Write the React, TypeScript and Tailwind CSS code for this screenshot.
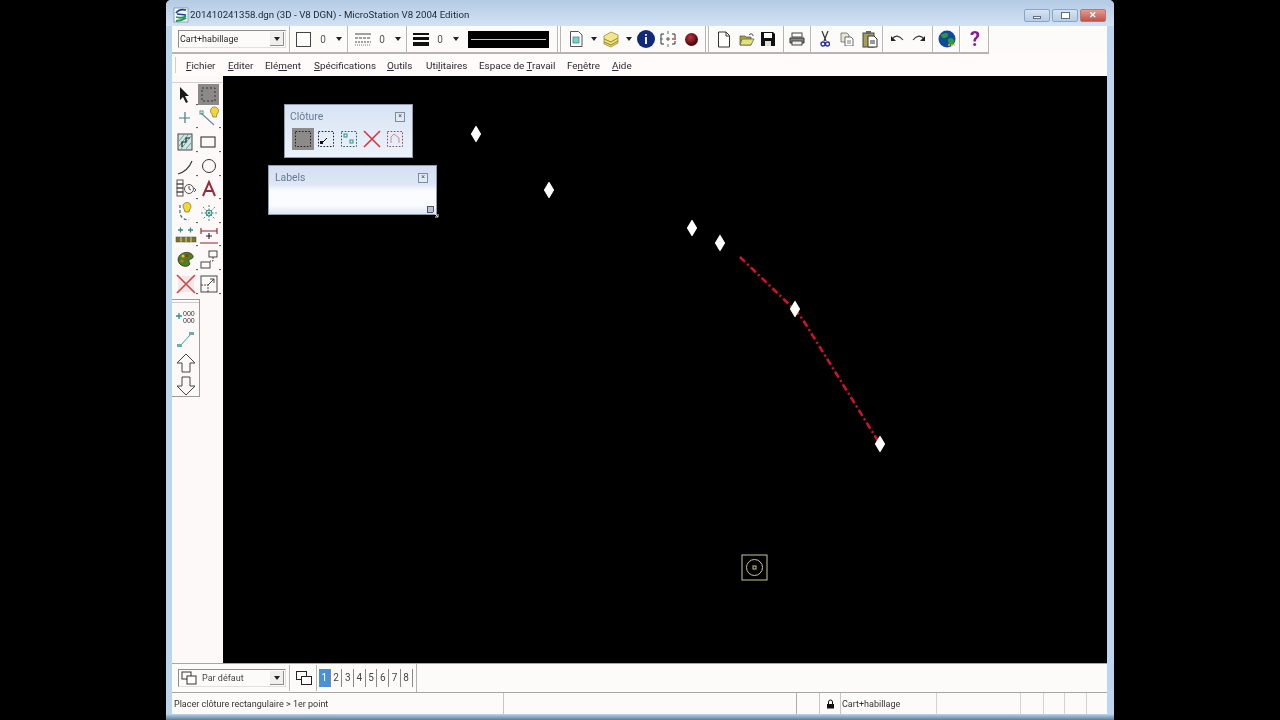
import React from "react";

const S = ({ w = 18, h = 18, vb, children, cls = "" }: { w?: number; h?: number; vb?: string; children: React.ReactNode; cls?: string }) => (
  <svg width={w} height={h} viewBox={vb ?? `0 0 ${w} ${h}`} className={"shrink-0 " + cls}>{children}</svg>
);

const Sep = ({ cls = "" }: { cls?: string }) => <div className={"h-[26px] w-[2px] shrink-0 border-l border-[#b9b6b2] bg-white " + cls} />;

const Tri = ({ cls = "" }: { cls?: string }) => <div className={"h-0 w-0 shrink-0 border-x-[3.5px] border-t-[4px] border-x-transparent border-t-[#222] " + cls} />;

const Combo = ({ children, cls = "" }: { children: React.ReactNode; cls?: string }) => (
  <div className={"flex h-[18px] w-[108px] shrink-0 items-center border border-t-[#8d8d8d] border-l-[#8d8d8d] border-r-[#e2e0de] border-b-[#e2e0de] bg-[#fdfbfa] " + cls}>
    <div className="flex min-w-0 flex-1 items-center overflow-hidden">{children}</div>
    <div className="mr-[1px] flex h-[14px] w-[14px] shrink-0 items-center justify-center border-b border-r border-[#8f8f8f] bg-[#f1efed]">
      <Tri />
    </div>
  </div>
);

const Cell = ({ x, children }: { x: string; children: React.ReactNode }) => (
  <div className={"flex shrink-0 items-center justify-center " + x}>{children}</div>
);

const WinBtn = ({ cls, children }: { cls: string; children: React.ReactNode }) => (
  <div className={"flex h-[13px] items-center justify-center rounded-[2px] border " + cls}>{children}</div>
);

const Flag = () => <path d="M22 21l2 0-1 1.5z" fill="#111" />;

const toolIcons: React.ReactNode[] = [
  <path d="M6 4l0 13 3-3 3 6 2-1-3-6 4 0z" fill="#1a1a1a" />,
  <g><rect x="1" y="1" width="21" height="21" fill="#8b8a88" /><rect x="5" y="5" width="13" height="13" fill="none" stroke="#333" strokeDasharray="2 2" /></g>,
  <g stroke="#3f7f86" strokeWidth="1.2"><path d="M11 6v11M5 12h11" /></g>,
  <g><path d="M4 7l13 12" stroke="#6f8aa0" strokeWidth="1.2" /><rect x="3" y="5" width="3" height="3" fill="none" stroke="#4a9a8a" /><path d="M15 8a4 4 0 1 1 5 0l-.6 3h-3.6z" fill="#f2d63a" stroke="#6b5a10" strokeWidth=".6" /></g>,
  <g><rect x="4" y="4" width="14" height="16" fill="#cfe6e2" stroke="#444" /><path d="M5 11l5-6M5 16l9-11M7 19l10-13M12 19l5-6" stroke="#5fa8a0" strokeWidth="1" /><path d="M8 17v-5h4V8h4" fill="none" stroke="#222" strokeWidth="1.2" /></g>,
  <rect x="4" y="7" width="14" height="10" fill="none" stroke="#333" strokeWidth="1.1" />,
  <path d="M4 20Q14 17 18 7" fill="none" stroke="#333" strokeWidth="1.1" />,
  <circle cx="12" cy="12" r="6.5" fill="none" stroke="#333" strokeWidth="1" />,
  <g fill="none" stroke="#444" strokeWidth=".9"><rect x="3" y="3" width="6" height="4" /><rect x="3" y="7" width="6" height="4" /><rect x="3" y="11" width="6" height="4" /><rect x="3" y="15" width="6" height="4" /><circle cx="15" cy="12" r="4.5" /><path d="M15 9v3l2 1M20 11l2 2-2 2" /></g>,
  <path d="M6 19L12 5l6 14M8.5 14h7" fill="none" stroke="#9a2a3a" strokeWidth="2" />,
  <g><path d="M6 4v7c0 5 4 8 9 8" fill="none" stroke="#2f6f78" strokeWidth="1.2" strokeDasharray="3 2" /><path d="M9 6a4 4 0 1 1 7 2l-1 3h-4l-1-3z" fill="#f2d63a" stroke="#6b5a10" strokeWidth=".6" /></g>,
  <g stroke="#3f8f8a" strokeWidth="1"><circle cx="12" cy="12" r="3" fill="#bfe0dc" /><path d="M12 4v16M4 12h16M6 6l12 12M18 6L6 18" strokeDasharray="2 1.5" /></g>,
  <g><path d="M4 6h5M6.5 3.500v5M14 6h5M16.500 3.500v5" stroke="#2f8f88" strokeWidth="1.3" /><rect x="2" y="13" width="20" height="5" fill="#7b7230" stroke="#444" strokeWidth=".5" /><path d="M7 13v5M12 13v5M17 13v5" stroke="#d9d6a0" /></g>,
  <g stroke="#a01828" fill="none"><path d="M4 4v6M20 4v6M4 7h16M3 19h18" strokeWidth="1.1" /><path d="M12 9v6M9 12h6" stroke="#222" strokeWidth="1.1" /></g>,
  <g><path d="M4 12c0-6 7-9 12-7 4 2 4 5 1 6-3 0-2 3-1 5-2 4-11 3-12-4z" fill="#4e7d27" stroke="#2a3a10" strokeWidth=".8" /><circle cx="9" cy="8" r="1.6" fill="#e8c020" /><circle cx="13" cy="7.5" r="1.5" fill="#c02020" /><circle cx="8" cy="13" r="1.6" fill="#d07020" /></g>,
  <g fill="none" stroke="#444"><rect x="12" y="3" width="8" height="6" /><rect x="4" y="14" width="9" height="6" /><path d="M16 9v4h-3" strokeDasharray="2 1" /></g>,
  <g><rect x="4" y="4" width="16" height="16" fill="#efe9e9" /><path d="M3 3l18 18M21 3L3 21" stroke="#d8434a" strokeWidth="1.7" fill="none" /></g>,
  <g fill="none" stroke="#444"><rect x="4" y="4" width="16" height="16" /><path d="M11 13l6-6M13 7h4v4" /><path d="M4 13h7v7" strokeDasharray="2 1" /></g>,
];

const Grid = () => (
  <div className="grid grid-cols-[23px_23px] gap-x-0 pl-[2px]">
    {toolIcons.map((ic, i) => (
      <div key={i} className="flex h-[23.6px] items-center justify-center">
        <S w={24} h={24}>{ic}{i !== 1 && <Flag />}</S>
      </div>
    ))}
  </div>
);

const Dash = ({ children, color = "#222" }: { children?: React.ReactNode; color?: string }) => (
  <S w={22} h={22}><rect x="3.5" y="3.5" width="15" height="15" fill="none" stroke={color} strokeDasharray="1.6 1.6" />{children}</S>
);

export default function App() {
  return (
    <div className="h-[720px] w-[1280px] overflow-hidden bg-black font-['Roboto','Noto_Sans',sans-serif] blur-[0.35px]">
      <div className="ml-[166px] flex h-[720px] w-[948px] flex-col rounded-t-[5px] bg-[#bcd6f0]">
        {/* Title */}
        <div className="flex h-[26px] shrink-0 items-center rounded-t-[5px] bg-gradient-to-b from-[#b4cbe4] to-[#d3e2f4] pl-[7px] pr-[8px]">
          <S w={16} h={16} cls="mt-[3px]">
            <rect x="1" y="1" width="14" height="14" fill="#f4f8fb" stroke="#5a7a9a" strokeWidth=".6" />
            <path d="M3 10c3 1 7 1 10-1M3 14c3 0 7-1 10-3" fill="none" stroke="#1e9a50" strokeWidth="1.8" />
            <path d="M3 6c2-3 6-4 10-3M4 7l9 1" fill="none" stroke="#1b3f9a" strokeWidth="1.7" />
          </S>
          <div className="ml-[1px] mt-[3px] flex-1 whitespace-nowrap text-[9.7px] leading-none text-[#1d2735]">201410241358.dgn (3D - V8 DGN) - MicroStation V8 2004 Edition</div>
          <div className="mt-[5px] flex gap-[2px]">
            <WinBtn cls="w-[26px] border-[#8ba5c4] bg-gradient-to-b from-[#d6e3f2] to-[#b8cce4]"><div className="mt-[3px] h-[3px] w-[8px] border border-[#5d6f85] bg-white" /></WinBtn>
            <WinBtn cls="w-[26px] border-[#8ba5c4] bg-gradient-to-b from-[#d6e3f2] to-[#b8cce4]"><div className="h-[7px] w-[9px] border border-[#5d6f85] bg-white" /></WinBtn>
            <WinBtn cls="w-[26px] border-[#b07a78] bg-gradient-to-b from-[#e59a8c] to-[#c2524a]"><span className="text-[9px] font-bold leading-none text-white">✕</span></WinBtn>
          </div>
        </div>

        <div className="flex min-h-0 flex-1 px-[6px] pr-[7px]">
          <div className="flex w-[935px] flex-col">
            {/* Toolbar */}
            <div className="flex h-[28px] shrink-0 items-center bg-[#fdfafa]">
              <div className="flex h-[28px] w-[817px] shrink-0 items-center border-b-2 border-[#b7b5b2] pl-[6px]">
                <Combo><span className="mt-[1px] pl-[1px] text-[9px] text-[#2a2a2a]">Cart+habillage</span></Combo>
                <Sep cls="ml-[3px]" />
                <Cell x="ml-[4px] w-[16px]"><div className="h-[15px] w-[15px] border border-[#444] bg-white" /></Cell>
                <Cell x="ml-[6px] w-[12px]"><span className="text-[10px] text-[#555]">0</span></Cell>
                <Cell x="ml-[4px] w-[12px]"><Tri /></Cell>
                <Sep cls="ml-[2px]" />
                <Cell x="ml-[5px] w-[17px]">
                  <S w={16} h={14}><path d="M0 2h16" stroke="#444" /><path d="M0 6h16" stroke="#444" strokeDasharray="3 1" /><path d="M0 10h16" stroke="#444" strokeDasharray="2 1" /><path d="M0 13h16" stroke="#777" strokeDasharray="1 1" /></S>
                </Cell>
                <Cell x="ml-[5px] w-[12px]"><span className="text-[10px] text-[#555]">0</span></Cell>
                <Cell x="ml-[4px] w-[12px]"><Tri /></Cell>
                <Sep cls="ml-[2px]" />
                <Cell x="ml-[4px] w-[17px]">
                  <S w={16} h={14}><rect y="1" width="16" height="2" fill="#111" /><rect y="5" width="16" height="3" fill="#111" /><rect y="10" width="16" height="4" fill="#111" /></S>
                </Cell>
                <Cell x="ml-[5px] w-[12px]"><span className="text-[10px] text-[#555]">0</span></Cell>
                <Cell x="ml-[4px] w-[12px]"><Tri /></Cell>
                <div className="ml-[6px] flex h-[17px] w-[81px] shrink-0 items-center bg-black px-[3px]"><div className="h-[1px] w-full bg-[#c8c8c8]" /></div>
                <Sep cls="ml-[8px]" />
                <Sep cls="ml-[1px]" />
                <Cell x="ml-[5px] w-[18px]">
                  <S w={16} h={18}><path d="M2.500 1.500h8l3.500 3.500v11.500h-11.500z" fill="#fff" stroke="#555" /><rect x="5" y="7" width="6" height="6" fill="#7fd0c0" stroke="#2f7f78" strokeWidth=".7" /></S>
                </Cell>
                <Cell x="ml-[5px] w-[8px]"><Tri /></Cell>
                <Cell x="ml-[4px] w-[18px]">
                  <S w={18} h={18}><path d="M2 6l7-4 7 3v3l-7 4-7-3z" fill="#f0e68a" stroke="#8f8028" strokeWidth=".7" /><path d="M2 9l7 3 7-4v3l-7 4-7-3z" fill="#ece07a" stroke="#8f8028" strokeWidth=".7" /><path d="M2 12l7 3 7-4v2l-7 4-7-3z" fill="#e4d66a" stroke="#8f8028" strokeWidth=".7" /></S>
                </Cell>
                <Cell x="ml-[5px] w-[8px]"><Tri /></Cell>
                <Cell x="ml-[4px] w-[18px]">
                  <div className="flex h-[18px] w-[18px] items-center justify-center rounded-full bg-[#102a78] text-[13px] font-bold leading-none text-white">i</div>
                </Cell>
                <Cell x="ml-[4px] w-[18px]">
                  <S w={18} h={18}><path d="M5 4h-3v10h3M13 4h3v4M13 14h3v-3" fill="none" stroke="#333" /><path d="M9 1v3M9 14v3M1 9h3" stroke="#2e8a6a" /><path d="M13 9h4" stroke="#cc2020" strokeWidth="1.3" /><circle cx="9" cy="9" r="1.200" fill="none" stroke="#444" /></S>
                </Cell>
                <Cell x="ml-[5px] w-[18px]">
                  <div className="h-[13px] w-[13px] rounded-full bg-[radial-gradient(circle_at_40%_35%,#c8303a,#3a080c_70%)]" />
                </Cell>
                <Sep cls="ml-[5px]" />
                <Sep cls="ml-[1px]" />
                <Cell x="ml-[5px] w-[18px]">
                  <S w={14} h={17}><path d="M1.500 1h7.500l3.500 3.500v11.500h-11z" fill="#fff" stroke="#333" /><path d="M9 1v4h3.500" fill="none" stroke="#333" /></S>
                </Cell>
                <Cell x="ml-[5px] w-[18px]">
                  <S w={16} h={14}><path d="M1 4h5l1 1h5v8H1z" fill="#a8a83a" stroke="#444" strokeWidth=".7" /><path d="M3 7h12l-3 6H1z" fill="#e4e07a" stroke="#555" strokeWidth=".7" /><path d="M10 3c2-2 4-1 4 1" fill="none" stroke="#333" /></S>
                </Cell>
                <Cell x="ml-[3px] w-[18px]">
                  <S w={14} h={14}><path d="M0 0h12l2 2v12H0z" fill="#111" /><rect x="3" y="1" width="8" height="5" fill="#fff" /><rect x="4" y="9" width="6" height="5" fill="#ddd" /></S>
                </Cell>
                <Sep cls="ml-[6px]" />
                <Cell x="ml-[3px] w-[18px]">
                  <S w={16} h={14}><rect x="3" y="1" width="10" height="4" fill="#fff" stroke="#444" /><path d="M1 6h14v5H1z" fill="#888" stroke="#333" /><rect x="3" y="9" width="10" height="4" fill="#eee" stroke="#444" /></S>
                </Cell>
                <Sep cls="ml-[4px]" />
                <Cell x="ml-[4px] w-[18px]">
                  <S w={10} h={16}><path d="M2 0l4 10M8 0L4 10" stroke="#333" strokeWidth="1.2" /><circle cx="3" cy="13" r="2" fill="none" stroke="#2b2f9a" strokeWidth="1.4" /><circle cx="7.500" cy="13" r="2" fill="none" stroke="#2b2f9a" strokeWidth="1.4" /></S>
                </Cell>
                <Cell x="ml-[4px] w-[18px]">
                  <S w={14} h={14}><path d="M1 1h6l2 2v7H1z" fill="#e6e6d2" stroke="#666" strokeWidth=".8" /><path d="M5 5h6l2 2v7H5z" fill="#fff" stroke="#444" strokeWidth=".8" /><path d="M7 9h4M7 11h4" stroke="#444" strokeWidth=".7" /></S>
                </Cell>
                <Cell x="ml-[5px] w-[18px]">
                  <S w={16} h={18}><rect x="1" y="3" width="11" height="14" fill="#a8a050" stroke="#444" /><rect x="4" y="1" width="5" height="3" fill="#666" /><path d="M6 6h6l3 3v8H6z" fill="#fff" stroke="#333" /><path d="M8 11h5M8 13h5" stroke="#333" /></S>
                </Cell>
                <Sep cls="ml-[3px]" />
                <Cell x="ml-[4px] w-[18px]">
                  <S w={14} h={10}><path d="M2 5c3-4 7-4 11 1" fill="none" stroke="#333" strokeWidth="1.1" /><path d="M1 2v5h5z" fill="#222" /></S>
                </Cell>
                <Cell x="ml-[4px] w-[18px]">
                  <S w={14} h={10}><path d="M12 5c-3-4-7-4-11 1" fill="none" stroke="#333" strokeWidth="1.1" /><path d="M13 2v5h-5z" fill="#222" /></S>
                </Cell>
                <Sep cls="ml-[4px]" />
                <Cell x="ml-[4px] w-[18px]">
                  <S w={18} h={18}><circle cx="9" cy="9" r="8.500" fill="#124a9a" /><path d="M3 5c2-2 6-3 7-1s-2 4-4 4-3-1-3-3zM10 9c2-1 5-1 6 1s-1 5-3 5-3-3-3-6z" fill="#2a9a3a" /><path d="M10 15h7" stroke="#d8c020" strokeWidth="1.500" strokeDasharray="2 1" /></S>
                </Cell>
                <Sep cls="ml-[3px]" />
                <Cell x="ml-[6px] w-[16px]"><span className="text-[20px] font-bold leading-none text-[#8a1a9a]">?</span></Cell>
                <Sep cls="ml-[5px]" />
              </div>
            </div>
            {/* Menu */}
            <div className="flex h-[22px] shrink-0 items-center bg-[#fffbfb] pl-[3px] text-[9.9px] leading-none text-[#2a2a30]">
              <div className="mr-[10px] h-[16px] w-[1px] border-l border-[#cfcdca]" />
              <div className="mt-[1px] w-[42px] shrink-0"><u>F</u>ichier</div>
              <div className="mt-[1px] w-[37px] shrink-0"><u>E</u>diter</div>
              <div className="mt-[1px] w-[49px] shrink-0">Elé<u>m</u>ent</div>
              <div className="mt-[1px] w-[73px] shrink-0"><u>S</u>pécifications</div>
              <div className="mt-[1px] w-[39px] shrink-0"><u>O</u>utils</div>
              <div className="mt-[1px] w-[53px] shrink-0">Uti<u>l</u>itaires</div>
              <div className="mt-[1px] w-[88px] shrink-0">Espace de <u>T</u>ravail</div>
              <div className="mt-[1px] w-[45px] shrink-0">Fe<u>n</u>être</div>
              <div className="mt-[1px] shrink-0"><u>A</u>ide</div>
            </div>
            {/* Body */}
            <div className="flex min-h-0 flex-1">
              <div className="flex w-[51px] shrink-0 flex-col bg-[#fdf9f8]">
                <div className="mt-[6px] border-t border-[#d5d3d0]">
                  <Grid />
                </div>
                <div className="mt-[4px] h-[98px] w-[28px] border-b border-r border-t border-[#9c9a98] bg-[#fdf9f8]">
                  <div className="mb-[2px] mt-[2px] h-[1px] bg-[#ccc]" />
                  <div className="flex h-[23px] items-center justify-center">
                    <S w={22} h={16}><path d="M1 7h6M4 4v6" stroke="#2f8f88" strokeWidth="1.300" /><text x="8" y="7" fontSize="7" fontFamily="Liberation Sans" fill="#333">000</text><text x="8" y="14" fontSize="7" fontFamily="Liberation Sans" fill="#333">000</text></S>
                  </div>
                  <div className="flex h-[23px] items-center justify-center">
                    <S w={20} h={20}><path d="M4 16L15 4" stroke="#3f9a90" strokeWidth="1" /><rect x="1" y="14" width="5" height="3" fill="#6fb0a4" /><rect x="13" y="2" width="5" height="3" fill="#6fb0a4" /></S>
                  </div>
                  <div className="flex h-[23px] items-center justify-center">
                    <S w={20} h={20}><path d="M10 1L1 10h5v9h8v-9h5z" fill="none" stroke="#444" /></S>
                  </div>
                  <div className="flex h-[23px] items-center justify-center">
                    <S w={20} h={20}><path d="M10 19L1 10h5V1h8v9h5z" fill="none" stroke="#444" /></S>
                  </div>
                </div>
              </div>
              <div className="relative min-w-0 flex-1 bg-black">
                <svg width="884" height="587" viewBox="223 76 884 587" className="block">
                  <path d="M740 257L795 310Q803 319 808 328L878 441" fill="none" stroke="#d01428" strokeWidth="2.600" strokeDasharray="7 3 2 3" />
                  {[[476, 134], [549, 190], [692, 228], [720, 243], [795, 309], [880, 444]].map(([x, y]) => (
                    <path key={x} d={`M${x} ${y - 7.5}l4.500 7.500-4.500 7.500-4.500-7.500z`} fill="#fff" stroke="#fff" strokeWidth="1.200" strokeLinejoin="round" />
                  ))}
                  <rect x="742" y="555" width="25" height="25" fill="none" stroke="#c8c890" />
                  <circle cx="754.500" cy="567.500" r="8" fill="none" stroke="#c8c890" />
                  <rect x="753" y="566" width="3" height="3" fill="none" stroke="#c8c890" />
                </svg>
                <div className="absolute left-[61px] top-[28px] h-[54px] w-[129px] border border-[#8f9bb0] bg-gradient-to-b from-[#d8e4f4] to-[#ecf2fb] px-[5px]">
                  <div className="flex h-[23px] items-center justify-between text-[10.4px] text-[#667a92]">
                    <span>Clôture</span>
                    <div className="mr-[2px] flex h-[10px] w-[10px] items-center justify-center border border-[#7b8da3] bg-[#e2e9f3] text-[7px] leading-none text-[#455]">×</div>
                  </div>
                  <div className="flex items-center gap-[1px] pl-[2px]">
                    <div className="flex h-[22px] w-[22px] items-center justify-center bg-[#8c8b89]"><Dash /></div>
                    <Dash><path d="M7 15l5-5" stroke="#111" /><rect x="5" y="13" width="3" height="3" fill="#111" /></Dash>
                    <Dash color="#2a5a5a"><rect x="6" y="6" width="3" height="3" fill="none" stroke="#2f8f88" /><rect x="12" y="12" width="3" height="3" fill="none" stroke="#2f8f88" /></Dash>
                    <S w={22} h={22}><path d="M3 3l16 16M19 3L3 19" stroke="#d8333a" strokeWidth="1.600" /></S>
                    <Dash color="#8a4a55"><path d="M7 15V9l3-3 5 4v5" fill="none" stroke="#d08a92" /></Dash>
                  </div>
                </div>
                <div className="absolute left-[45px] top-[89px] h-[50px] w-[169px] border border-[#8f9bb0] bg-[linear-gradient(180deg,#d3e0f2_0%,#dde7f5_38%,#fbfcfe_52%,#fafbfe_82%,#dde7f5_100%)] px-[6px]">
                  <div className="flex h-[23px] items-center justify-between text-[10.4px] text-[#667a92]">
                    <span>Labels</span>
                    <div className="mr-[2px] flex h-[10px] w-[10px] items-center justify-center border border-[#7b8da3] bg-[#e2e9f3] text-[7px] leading-none text-[#455]">×</div>
                  </div>
                </div>
                <div className="absolute left-[204px] top-[130px]">
                  <S w={13} h={13}><rect x="0.500" y="0.500" width="6" height="6" fill="#b8c4d0" stroke="#556" /><path d="M6 6l5 5M8 11h3V8" stroke="#ddd" fill="none" /></S>
                </div>
              </div>
            </div>
            {/* View bar */}
            <div className="flex h-[29px] shrink-0 items-center border-t border-[#a8a6a4] bg-[#fdfafa] pl-[6px]">
              <Combo cls="h-[17px]">
                <S w={16} h={14} cls="ml-[2px]"><rect x="1" y="1" width="9" height="7" fill="none" stroke="#333" /><rect x="6" y="5" width="9" height="8" fill="#fff" stroke="#333" /></S>
                <span className="ml-[5px] mt-[1px] text-[9px] text-[#444]">Par défaut</span>
              </Combo>
              <Sep cls="ml-[3px]" />
              <Cell x="ml-[4px] w-[18px]">
                <S w={18} h={16}><rect x="1.500" y="1.500" width="10" height="8" fill="none" stroke="#222" /><rect x="6.500" y="6.500" width="10" height="8" fill="#fff" stroke="#222" /></S>
              </Cell>
              <Sep cls="ml-[3px]" />
              <div className="ml-[1px] flex">
                {[1, 2, 3, 4, 5, 6, 7, 8].map((n) => (
                  <div key={n} className={"flex h-[18px] w-[11.700px] items-center justify-center border-r border-[#8a8886] text-[10px] leading-none " + (n === 1 ? "bg-[#4a90d8] text-white" : "bg-[#fdfafa] text-[#444]")}>{n}</div>
                ))}
              </div>
              <div className="ml-[3px] h-[28px] w-[1px] bg-[#b5b3b0]" />
            </div>
            {/* Status bar */}
            <div className="flex h-[22px] shrink-0 items-center border-t border-[#a8a6a4] bg-[#fdfafa] text-[9px] leading-none text-[#333]">
              <div className="mt-[2px] w-[331px] shrink-0 pl-[2px]">Placer clôture rectangulaire &gt; 1er point</div>
              <div className="h-full w-[293px] shrink-0 border-l border-[#c9c7c5]" />
              <div className="h-full w-[23px] shrink-0 border-l border-[#b0aeac]" />
              <div className="flex h-full w-[21px] shrink-0 items-center justify-center border-l border-[#c9c7c5]">
                <S w={9} h={10}><path d="M2.500 5V3a2 2 0 0 1 4 0v2" fill="none" stroke="#111" /><rect x="1" y="5" width="7" height="4.500" fill="#111" /></S>
              </div>
              <div className="flex h-full w-[96px] shrink-0 items-center border-l border-[#c9c7c5] pl-[1px] pt-[2px]">Cart+habillage</div>
              <div className="h-full w-[84px] shrink-0 border-l border-[#d5d3d1]" />
              <div className="h-full w-[23px] shrink-0 border-l border-[#d5d3d1]" />
              <div className="h-full w-[21px] shrink-0 border-l border-[#d5d3d1]" />
              <div className="h-full w-[22px] shrink-0 border-l border-[#d5d3d1]" />
              <div className="h-full flex-1 border-l border-[#d5d3d1]" />
            </div>
          </div>
        </div>
        <div className="h-[6px] shrink-0 bg-gradient-to-b from-[#b8d6ee] to-[#5f7f98]" />
      </div>
    </div>
  );
}
